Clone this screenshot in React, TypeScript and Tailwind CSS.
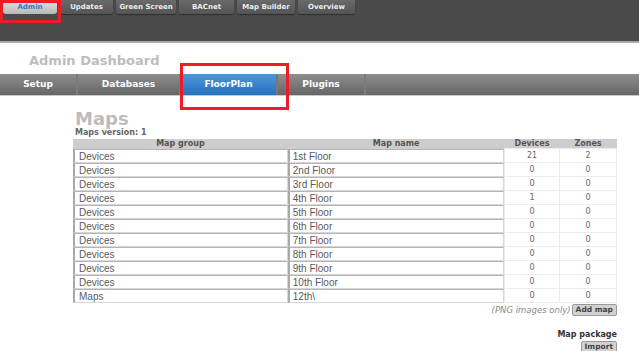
import React from 'react';

const topTabs = ['Admin', 'Updates', 'Green Screen', 'BACnet', 'Map Builder', 'Overview'];
const tabWidths = [54, 53, 60, 55, 58, 57];

const subTabs = [
  { label: 'Setup', w: 78 },
  { label: 'Databases', w: 103 },
  { label: 'FloorPlan', w: 97 },
  { label: 'Plugins', w: 88 },
];

const rows = [
  ['Devices', '1st Floor', '21', '2'],
  ['Devices', '2nd Floor', '0', '0'],
  ['Devices', '3rd Floor', '0', '0'],
  ['Devices', '4th Floor', '1', '0'],
  ['Devices', '5th Floor', '0', '0'],
  ['Devices', '6th Floor', '0', '0'],
  ['Devices', '7th Floor', '0', '0'],
  ['Devices', '8th Floor', '0', '0'],
  ['Devices', '9th Floor', '0', '0'],
  ['Devices', '10th Floor', '0', '0'],
  ['Maps', '12th\\', '0', '0'],
];

export default function App() {
  return (
    <div className="relative w-[639px] h-[351px] overflow-hidden bg-white font-['DejaVu_Sans',sans-serif]">
      {/* top dark bar */}
      <div className="h-[43px] bg-[#4a4a4a] border-b-2 border-[#a8a8a8]">
        <div className="flex gap-[3px] pl-[3px]">
          {topTabs.map((t, i) => (
            <div
              key={t}
              style={{ width: tabWidths[i] }}
              className={
                i === 0
                  ? 'h-[14px] flex items-center justify-center rounded-b-[3px] bg-gradient-to-b from-[#e4e4e4] to-[#b8b8b8] text-[#2f78c4] text-[7px] font-bold'
                  : 'h-[14px] flex items-center justify-center rounded-b-[3px] bg-gradient-to-b from-[#6a6a6a] to-[#545454] text-[#e8edf4] text-[7px] font-bold shadow-[0_1px_1px_rgba(0,0,0,0.4)]'
              }
            >
              {t}
            </div>
          ))}
        </div>
      </div>

      <div className="pl-[29px] pt-[10px] h-[31px] text-[13px] font-bold text-[#bdbdbd] leading-[16px]">
        Admin Dashboard
      </div>

      {/* sub nav */}
      <div className="flex h-[22px] bg-gradient-to-b from-[#8e8e8e] to-[#666] border-b border-[#c8c8c8]">
        {subTabs.map((t) => (
          <div
            key={t.label}
            style={{ width: t.w }}
            className={
              t.label === 'FloorPlan'
                ? 'flex items-center justify-center bg-gradient-to-b from-[#4a97dc] to-[#2a72bd] text-white text-[9px] font-bold border-r-2 border-[#777]'
                : 'flex items-center justify-center text-white text-[9px] font-bold border-r-2 border-[#7c7c7c]'
            }
          >
            {t.label}
          </div>
        ))}
      </div>

      {/* content */}
      <div className="ml-[73px] w-[544px] pt-[13px]">
        <div className="pl-[2px] text-[18px] font-bold text-[#bcbcbc] leading-[19px]">Maps</div>
        <div className="pl-[2px] text-[8px] font-bold text-[#666] leading-[10px]">Maps version: 1</div>
        <table className="mt-[1px] w-[544px] border-collapse text-[#555]">
          <thead>
            <tr className="bg-[#cdcdcd] h-[9px] text-[8px] font-bold leading-[9px]">
              <th className="w-[215px] font-bold">Map group</th>
              <th className="w-[217px] font-bold">Map name</th>
              <th className="w-[55px] font-bold">Devices</th>
              <th className="w-[57px] font-bold">Zones</th>
            </tr>
          </thead>
          <tbody>
            {rows.map((r, i) => (
              <tr key={i} className="h-[14px]">
                <td className="p-0">
                  <div className="h-[14px] border border-[#d6d6d6] border-l-2 border-l-[#a9a9a9] border-t-[#b5b5b5] pl-[4px] text-[10px] leading-[13px] font-['Liberation_Sans',sans-serif] text-[#5a5a5a]">
                    {r[0]}
                  </div>
                </td>
                <td className="p-0">
                  <div className="h-[14px] border border-[#d6d6d6] border-l-2 border-l-[#a9a9a9] border-t-[#b5b5b5] pl-[3px] text-[10px] leading-[13px] font-['Liberation_Sans',sans-serif] text-[#5a5a5a]">
                    {r[1]}
                  </div>
                </td>
                <td className="p-0 border border-[#ececec] text-center text-[8px] text-[#666]">{r[2]}</td>
                <td className="p-0 border border-[#ececec] text-center text-[8px] text-[#666]">{r[3]}</td>
              </tr>
            ))}
          </tbody>
        </table>
        <div className="mt-[1px] flex justify-end items-center gap-[1px]">
          <span className="text-[8.5px] italic text-[#888]">(PNG images only)</span>
          <button className="h-[12px] px-[3px] bg-[#d2d2d2] border border-[#999] rounded-[2px] text-[7.5px] font-bold text-[#444] leading-[10px]">
            Add map
          </button>
        </div>
        <div className="mt-[13px] flex flex-col items-end">
          <div className="text-[8px] font-bold text-[#333] leading-[10px]">Map package</div>
          <button className="mt-[1px] h-[11px] px-[3px] bg-[#d2d2d2] border border-[#999] rounded-[2px] text-[7.5px] font-bold text-[#444] leading-[9px]">
            Import
          </button>
        </div>
      </div>

      {/* annotation boxes */}
      <div className="absolute left-0 top-0 w-[61px] h-[23px] border-[3px] border-[#ee1c24]" />
      <div className="absolute left-[180px] top-[63px] w-[109px] h-[47px] border-[3px] border-[#ee1c24]" />
    </div>
  );
}
